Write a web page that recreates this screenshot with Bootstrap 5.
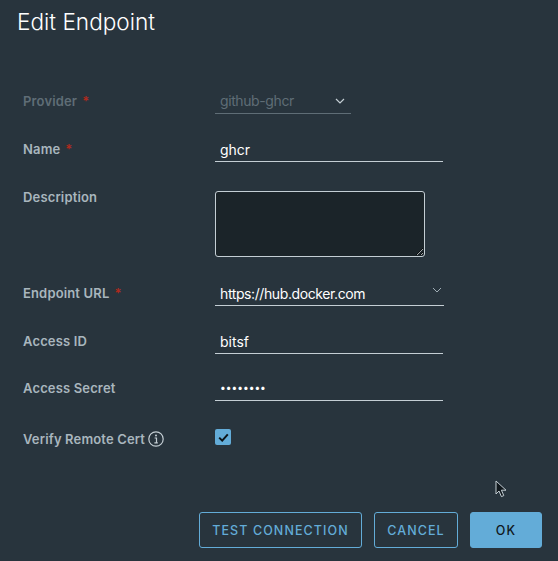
<!DOCTYPE html>
<html lang="en">
<head>
<meta charset="utf-8">
<title>Edit Endpoint</title>
<link href="https://cdn.jsdelivr.net/npm/bootstrap@5.3.0/dist/css/bootstrap.min.css" rel="stylesheet">
<style>
html,body{height:100%;overflow:hidden}
body{background:#28343d;font-family:"Inter","Open Sans",sans-serif;color:#fff;position:relative}
.dlg{height:561px;width:558px;display:flex;flex-direction:column}
.dlg-title{font-family:"Inter",sans-serif;font-size:22.6px;font-weight:300;line-height:30px;margin:7px 0 0 17px;color:#fff}
.dlg-form{margin:52px 0 0 23px}
.frow{display:flex}
.flabel{width:192px;flex:none;margin:0;padding:0;font-size:13px;font-weight:600;letter-spacing:.15px;color:#a9b6be;line-height:24px}
.flabel.off{color:#5f6d76}
.req{color:#b02a1e;margin-left:5px}
.fctl{display:block;width:228px;height:25px;background:transparent;border:0;border-bottom:1px solid #c4ced4;border-radius:0;color:#fff;font-size:14px;padding:0 5px;line-height:24px;font-family:"Inter",sans-serif;outline:0}
.fctl.sm{width:136px;border-color:#5f6d76;color:#5f6d76;display:flex;justify-content:space-between;align-items:center;padding-right:6px;letter-spacing:-.4px}
.fctl.wd{width:229px;display:flex;justify-content:space-between;align-items:center;padding-top:2px;padding-right:2px;letter-spacing:-.4px}
.fctl.pw{font-size:10.2px;padding-bottom:2px}
.farea{display:block;width:210px;height:66px;margin-top:6px;background:#1b2429;border:1px solid #c4ced4;border-radius:3px;outline:0}
.r1{margin-bottom:23px}.r2{margin-bottom:24px}.r3{margin-bottom:23px}.r4{margin-bottom:22px}.r5{margin-bottom:26px}.r6{margin-bottom:28px}
.lab-verify{display:flex;align-items:center;gap:3px}
.chk{width:16px;height:16px;background:#63acd8;border-radius:2px;display:flex;align-items:center;justify-content:center;margin-top:2px}
.foot{display:flex;justify-content:flex-end;gap:12px;margin:auto 16px 13px 0}
.b-act{height:36px;font-size:12.5px;font-weight:500;letter-spacing:1.1px;border:1px solid #63acd8;border-radius:3px;color:#63acd8;background:transparent;text-transform:uppercase;font-family:"Inter",sans-serif;padding:2px 0 0;display:flex;align-items:center;justify-content:center}
.b-test{width:163px}.b-can{width:84px}
.b-ok{width:72px;background:#63acd8;color:#11181d}
.ptr{position:absolute;left:495px;top:480px}
</style>
</head>
<body>
<div class="dlg">
  <h1 class="dlg-title">Edit Endpoint</h1>
  <form class="dlg-form">
    <div class="frow r1">
      <label class="flabel off">Provider<span class="req">*</span></label>
      <div class="fctl sm"><span>github-ghcr</span>
        <svg width="10" height="7" viewBox="0 0 10 7"><path d="M1 1l4 4 4-4" fill="none" stroke="#c4ced4" stroke-width="1.2"/></svg></div>
    </div>
    <div class="frow r1">
      <label class="flabel">Name<span class="req">*</span></label>
      <input class="fctl" value="ghcr">
    </div>
    <div class="frow r2">
      <label class="flabel">Description</label>
      <textarea class="farea"></textarea>
    </div>
    <div class="frow r3">
      <label class="flabel">Endpoint URL<span class="req">*</span></label>
      <div class="fctl wd"><span>https://hub.docker.com</span>
        <svg width="10" height="7" viewBox="0 0 10 7" class="mb-2"><path d="M1 1l4 4 4-4" fill="none" stroke="#9fadb5" stroke-width="1"/></svg></div>
    </div>
    <div class="frow r4">
      <label class="flabel">Access ID</label>
      <input class="fctl" value="bitsf">
    </div>
    <div class="frow r5">
      <label class="flabel">Access Secret</label>
      <input class="fctl pw" type="password" value="password">
    </div>
    <div class="frow r6">
      <label class="flabel lab-verify">Verify Remote Cert
        <svg width="16" height="16" viewBox="0 0 16 16"><circle cx="8" cy="8" r="7.2" fill="none" stroke="#c4ced4" stroke-width="1.2"/><circle cx="8" cy="4.6" r="1" fill="#c4ced4"/><path d="M6.6 7h1.9v4.6M6.4 11.8h3.4" fill="none" stroke="#c4ced4" stroke-width="1.2"/></svg>
      </label>
      <div class="chk"><svg width="11" height="9" viewBox="0 0 11 9"><path d="M1.2 4.6l3 3 5.6-6.2" fill="none" stroke="#0d1418" stroke-width="2"/></svg></div>
    </div>
  </form>
  <div class="foot">
    <button type="button" class="btn b-act b-test">Test Connection</button>
    <button type="button" class="btn b-act b-can">Cancel</button>
    <button type="button" class="btn b-act b-ok">OK</button>
  </div>
</div>
<svg class="ptr" width="13" height="18" viewBox="0 0 13 18"><path d="M1 1v13l3-3 2.4 5.6 2.4-1L6.4 10.2h4.6z" fill="#11181d" stroke="#c4ced4" stroke-width="1"/></svg>
</body>
</html>
